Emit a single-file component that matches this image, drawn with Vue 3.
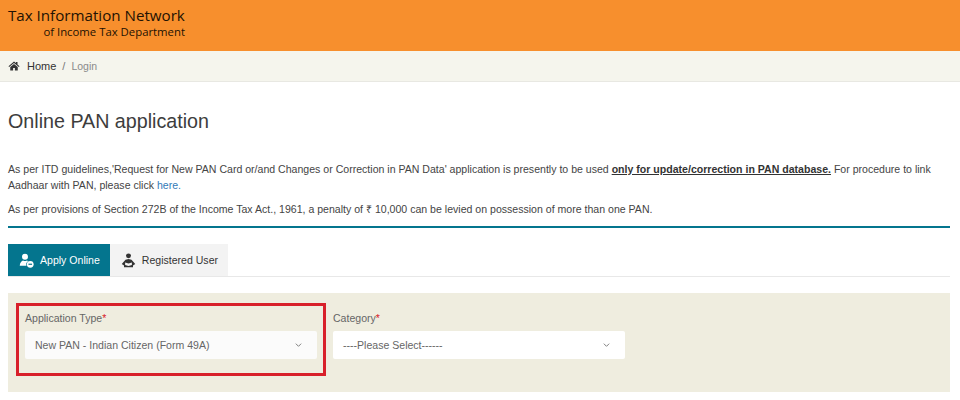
<script setup>
import { ref } from 'vue'

const activeTab = ref('apply')
</script>

<template>
  <div class="page">
    <header class="top-bar">
      <div class="logo-text">
        <div class="logo-main">Tax Information Network</div>
        <div class="logo-sub">of Income Tax Department</div>
      </div>
    </header>

    <nav class="breadcrumb">
      <svg class="home-icon" viewBox="0 0 24 24" width="12" height="12">
        <path fill="#333" d="M12 3 1 12.500l1.300 1.500L12 5.800l9.700 8.200 1.300-1.500-4-3.400V4h-3v2.100zM4.500 14.200V21h5.700v-5h3.600v5h5.700v-6.800L12 8z" />
      </svg>
      <a class="crumb-link">Home</a>
      <span class="crumb-sep">/</span>
      <span class="crumb-current">Login</span>
    </nav>

    <main class="content">
      <h1>Online PAN application</h1>

      <p class="note first">
        As per ITD guidelines,'Request for New PAN Card or/and Changes or Correction in PAN Data' application is presently to be used
        <strong>only for update/correction in PAN database.</strong>
        For procedure to link Aadhaar with PAN, please click <a class="link">here.</a>
      </p>
      <p class="note">
        As per provisions of Section 272B of the Income Tax Act., 1961, a penalty of ₹ 10,000 can be levied on possession of more than one PAN.
      </p>

      <div class="tabs">
        <button class="tab" :class="{ active: activeTab === 'apply' }" @click="activeTab = 'apply'">
          <svg viewBox="0 0 20 20" width="15" height="15">
            <circle cx="8" cy="5" r="4" fill="currentColor" />
            <path fill="currentColor" d="M1 17c0-4 2.500-6.500 4.500-7 1.500 1 3.500 1 5 0 .6.200 1.200.600 1.700 1A5 5 0 0 0 10 17z" />
            <circle cx="15" cy="15" r="4.500" fill="currentColor" />
            <rect x="12.600" y="14.200" width="4.800" height="1.600" fill="#04758e" />
          </svg>
          Apply Online
        </button>
        <button class="tab" :class="{ active: activeTab === 'registered' }" @click="activeTab = 'registered'">
          <svg viewBox="0 0 20 20" width="15" height="15">
            <circle cx="10" cy="3.800" r="3.300" fill="currentColor" />
            <path fill="currentColor" d="M10 8 6 9 1 14.500 4 16.500V19h12v-2.500l3-2L14 9z" />
            <path fill="#f3f3f3" d="M5.500 12.500 10 14l4.500-1.500v3.500L10 17.200 5.500 16z" />
          </svg>
          Registered User
        </button>
      </div>

      <form class="form-panel" @submit.prevent>
        <div class="field highlighted">
          <label>Application Type<span class="req">*</span></label>
          <div class="fake-select filled">
            <span>New PAN - Indian Citizen (Form 49A)</span>
            <svg viewBox="0 0 10 6" width="7" height="4"><path d="M1 1l4 4 4-4" fill="none" stroke="#777" stroke-width="1.400" /></svg>
          </div>
        </div>
        <div class="field">
          <label>Category<span class="req">*</span></label>
          <div class="fake-select">
            <span>----Please Select------</span>
            <svg viewBox="0 0 10 6" width="7" height="4"><path d="M1 1l4 4 4-4" fill="none" stroke="#777" stroke-width="1.400" /></svg>
          </div>
        </div>
      </form>
    </main>
  </div>
</template>

<style scoped>
.page {
  width: 960px;
  height: 400px;
  overflow: hidden;
  background: #fff;
  font-family: "Liberation Sans", Arial, sans-serif;
  color: #333;
}

.top-bar {
  height: 51px;
  background: #f78f2d;
  padding: 6px 0 0 8px;
  box-sizing: border-box;
}

.logo-text {
  width: 177px;
  font-family: "Open Sans", sans-serif;
  color: #231203;
}

.logo-main {
  font-size: 15.150px;
  line-height: 18px;
  white-space: nowrap;
}

.logo-sub {
  font-size: 11.350px;
  line-height: 16px;
  text-align: right;
  white-space: nowrap;
}

.breadcrumb {
  height: 31px;
  box-sizing: border-box;
  background: #f5f5ed;
  border-bottom: 1px solid #e8e8e2;
  padding-left: 8px;
  display: flex;
  align-items: center;
  font-size: 11px;
}

.crumb-link {
  margin-left: 7px;
  color: #333;
}

.crumb-sep {
  margin: 0 6px;
  color: #777;
}

.crumb-current {
  color: #8a8a8a;
  font-size: 10.500px;
}

.content {
  padding: 0 10px 0 8px;
}

h1 {
  margin: 0;
  padding-top: 27px;
  font-size: 19.700px;
  line-height: 24px;
  font-weight: 400;
  color: #3d3d3d;
}

.note {
  margin: 0 0 8px;
  font-size: 10.570px;
  line-height: 16px;
  color: #444;
}

.note.first {
  margin-top: 28px;
}

.note strong {
  text-decoration: underline;
  color: #333;
}

.link {
  color: #337ab7;
}

.tabs {
  margin-top: 9px;
  padding-top: 16px;
  border-top: 2px solid #04758e;
  display: flex;
  border-bottom: 1px solid #e8e8e8;
}

.tab {
  height: 32px;
  padding: 0 10px 0 11px;
  border: none;
  display: flex;
  align-items: center;
  gap: 6px;
  font-family: inherit;
  font-size: 10.560px;
  background: #f3f3f3;
  color: #333;
}

.tab.active {
  background: #04758e;
  color: #fff;
}

.form-panel {
  margin-top: 16px;
  height: 99px;
  background: #efeddf;
  padding: 10px 0 0 8px;
  box-sizing: border-box;
  display: flex;
  align-items: flex-start;
}

.field {
  width: 310px;
  height: 73px;
  box-sizing: border-box;
  border: 3px solid transparent;
  padding: 5px 6px 0;
}

.field + .field {
  margin-left: -2px;
}

.field.highlighted {
  border-color: #d8202a;
}

label {
  display: block;
  font-size: 10.560px;
  line-height: 14px;
  color: #666;
  margin-bottom: 6px;
}

.req {
  color: #d8202a;
}

.fake-select {
  height: 28px;
  background: #fff;
  border-radius: 2px;
  padding: 0 15px 0 10px;
  display: flex;
  align-items: center;
  justify-content: space-between;
  font-size: 10.560px;
  color: #666;
}

.fake-select.filled {
  background: #fbfbfb;
}
</style>
